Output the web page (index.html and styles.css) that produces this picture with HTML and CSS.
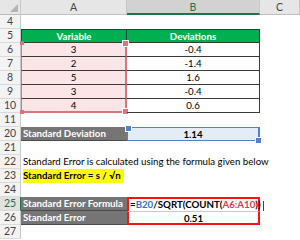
FILE: index.html
```html
<!DOCTYPE html>
<html>
<head><meta charset="utf-8"><link rel="stylesheet" href="styles.css"></head>
<body>
<div class="sheet">
  <div class="row hdr">
    <div class="rh corner"><span class="tri"></span></div>
    <div class="ch a">A</div>
    <div class="ch b sel">B</div>
    <div class="ch c">C</div>
  </div>
  <div class="row"><div class="rh">4</div><div class="cell a"></div><div class="cell b"></div><div class="cell c"></div></div>
  <div class="row"><div class="rh">5</div><div class="cell a th">Variable</div><div class="cell b th">Deviations</div><div class="cell c"></div></div>
  <div class="row"><div class="rh">6</div><div class="cell a pk first">3</div><div class="cell b tb">-0.4</div><div class="cell c"></div></div>
  <div class="row"><div class="rh">7</div><div class="cell a pk">2</div><div class="cell b tb">-1.4</div><div class="cell c"></div></div>
  <div class="row"><div class="rh">8</div><div class="cell a pk">5</div><div class="cell b tb">1.6</div><div class="cell c"></div></div>
  <div class="row"><div class="rh">9</div><div class="cell a pk">3</div><div class="cell b tb">-0.4</div><div class="cell c"></div></div>
  <div class="row"><div class="rh">10</div><div class="cell a pk last">4</div><div class="cell b tb">0.6</div><div class="cell c"></div></div>
  <div class="row"><div class="rh">11</div><div class="cell a"></div><div class="cell b"></div><div class="cell c"></div></div>
  <div class="row"><div class="rh">20</div><div class="cell a dk">Standard Deviation</div><div class="cell b bl">1.14</div><div class="cell c"></div></div>
  <div class="row"><div class="rh">21</div><div class="cell a"></div><div class="cell b"></div><div class="cell c"></div></div>
  <div class="row"><div class="rh">22</div><div class="cell a txt">Standard Error is calculated using the formula given below</div><div class="cell b"></div><div class="cell c"></div></div>
  <div class="row"><div class="rh">23</div><div class="cell a txt"><span class="yel">Standard Error = s / √n</span></div><div class="cell b"></div><div class="cell c"></div></div>
  <div class="row"><div class="rh">24</div><div class="cell a"></div><div class="cell b"></div><div class="cell c"></div></div>
  <div class="row"><div class="rh selrow">25</div><div class="cell a dk">Standard Error Formula</div><div class="cell b rb top"><span class="fx">=<span class="ref1">B20</span>/SQRT(COUNT(<span class="ref2">A6:A10</span>))</span><span class="caret"></span></div><div class="cell c"></div></div>
  <div class="row"><div class="rh">26</div><div class="cell a dk">Standard Error</div><div class="cell b rb bot">0.51</div><div class="cell c"></div></div>
  <div class="row"><div class="rh">27</div><div class="cell a"></div><div class="cell b"></div><div class="cell c"></div></div>
</div>
</body>
</html>
```
FILE: styles.css
```css
* { box-sizing: border-box; }
body { margin: 0; background: #fff; font-family: "Lato", "Liberation Sans", sans-serif; font-size: 9.7px; color: #000; overflow: hidden; }
.sheet { width: 300px; }
.row { display: flex; height: 14px; }
.row.hdr { height: 15px; }
.rh { width: 21px; flex: none; background: #f3f3f3; border-right: 1px solid #c8c8c8; border-bottom: 1px solid #dadada; color: #444; text-align: center; line-height: 13px; font-size: 10.5px; }
.rh.selrow { color: #217346; border-right: 1px solid #217346; background: #e1e1e1; }
.corner { background: #e6e6e6; border-bottom: 1px solid #bdbdbd; position: relative; }
.tri { position: absolute; right: 2px; bottom: 2px; width: 0; height: 0; border-left: 8px solid transparent; border-bottom: 8px solid #b5b5b5; }
.ch { background: #e6e6e6; border-right: 1px solid #c6c6c6; border-bottom: 1px solid #bdbdbd; text-align: center; line-height: 14px; color: #444; font-size: 10.5px; }
.ch.sel { background: #d2d2d2; color: #217346; border-bottom: 2px solid #217346; }
.a { width: 106px; flex: none; }
.b { width: 133px; flex: none; }
.c { flex: 1; }
.cell { position: relative; line-height: 13px; white-space: nowrap; text-align: center; }
.th { background: #00b050; color: #fff; font-weight: bold; border-top: 1px solid #3a3a3a; border-bottom: 1px solid #3a3a3a; line-height: 12px; }
.cell.a.th { border-left: 1px solid #3a3a3a; border-right: 1px solid #3a3a3a; }
.cell.b.th { border-right: 1px solid #3a3a3a; }
.tb { border-bottom: 1px solid #3a3a3a; border-right: 1px solid #3a3a3a; }
.pk { background: #fbe5e6; border-bottom: 1px solid #3a3a3a; border-left: 1px solid #d9767c; border-right: 2px solid #d9767c; }
.pk.last { border-bottom: 2px solid #d9767c; }
.pk.first::before { content: ""; position: absolute; left: -2px; top: -2px; width: 4px; height: 4px; background: #d9767c; }
.pk.first::after { content: ""; position: absolute; right: -4px; top: -3px; width: 5px; height: 5px; background: #d9767c; border: 1px solid #fff; }
.pk.last::before { content: ""; position: absolute; left: -2px; bottom: -3px; width: 4px; height: 4px; background: #d9767c; }
.pk.last::after { content: ""; position: absolute; right: -4px; bottom: -4px; width: 5px; height: 5px; background: #d9767c; border: 1px solid #fff; }
.dk { background: #757575; color: #fff; font-weight: bold; text-align: left; padding-left: 2px; border-bottom: 1px solid #4a4a4a; }
.bl { background: #e4ecf7; font-weight: bold; border: 1px solid #4f81d0; border-right-width: 2px; }
.bl::before { content: ""; position: absolute; left: -3px; top: -3px; width: 5px; height: 5px; background: #4f81d0; border: 1px solid #fff; }
.bl::after { content: ""; position: absolute; right: -4px; bottom: -4px; width: 5px; height: 5px; background: #4f81d0; border: 1px solid #fff; }
.txt { text-align: left; padding-left: 2px; overflow: visible; }
.yel { background: #ffff00; font-weight: bold; padding: 0 3px 1px 0; display: inline-block; line-height: 13px; }
.rb { border-left: 2px solid #ff1010; border-right: 2px solid #ff1010; }
.rb.top { border-top: 2px solid #ff1010; text-align: left; padding-left: 1px; font-weight: bold; line-height: 11px; }
.rb.bot { border-bottom: 2px solid #ff1010; font-weight: bold; line-height: 12px; border-top: 1px solid #c8c8c8; }
.ref1 { color: #3b6fd1; }
.ref2 { color: #e0394f; }
.caret { display: inline-block; width: 1px; height: 10px; background: #444; vertical-align: middle; margin-left: 2px; }
.rb.top::after { content: ""; position: absolute; right: 0; bottom: -1px; width: 8px; height: 1px; background: #217346; }
```
